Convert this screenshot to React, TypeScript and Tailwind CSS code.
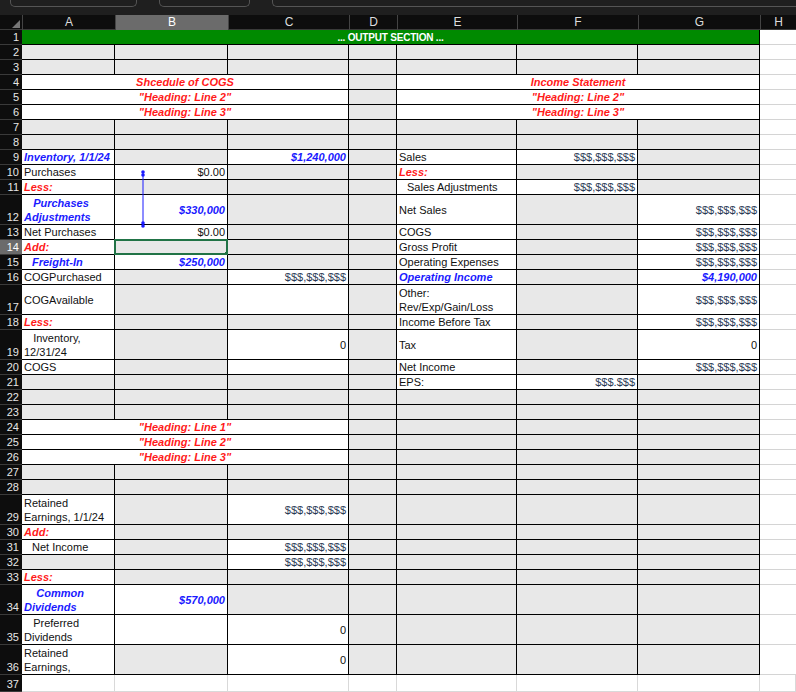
import React from 'react';

type Kind = 'n' | 'blue' | 'red' | 'money' | 'hd';
type Cell = { t?: string; s?: number; g?: boolean; r?: boolean; k?: Kind; ind?: boolean; mid?: boolean };

const cols = 'grid grid-cols-[22px_93px_113px_121px_48px_120px_121px_122px_36px]';
const M = '$$$,$$$,$$$';

const G: Cell = { g: true };
const W: Cell = {};
const g3 = [G, G, G];

// left block (A-C) and right block (E-G) per row 2..36
const rows: { n: number; tall?: boolean; L: Cell[]; R: Cell[] }[] = [
  { n: 2, L: g3, R: g3 },
  { n: 3, L: g3, R: g3 },
  { n: 4, L: [{ t: 'Shcedule of COGS', s: 3, k: 'hd' }], R: [{ t: 'Income Statement', s: 3, k: 'hd' }] },
  { n: 5, L: [{ t: '"Heading: Line 2"', s: 3, k: 'hd' }], R: [{ t: '"Heading: Line 2"', s: 3, k: 'hd' }] },
  { n: 6, L: [{ t: '"Heading: Line 3"', s: 3, k: 'hd' }], R: [{ t: '"Heading: Line 3"', s: 3, k: 'hd' }] },
  { n: 7, L: g3, R: g3 },
  { n: 8, L: g3, R: g3 },
  { n: 9, L: [{ t: 'Inventory, 1/1/24', k: 'blue' }, G, { t: '$1,240,000', k: 'blue', r: true }], R: [{ t: 'Sales' }, { t: M, k: 'money', r: true }, G] },
  { n: 10, L: [{ t: 'Purchases' }, { t: '$0.00', r: true }, G], R: [{ t: 'Less:', k: 'red' }, G, G] },
  { n: 11, L: [{ t: 'Less:', k: 'red' }, G, G], R: [{ t: 'Sales Adjustments', ind: true }, { t: M, k: 'money', r: true }, G] },
  { n: 12, tall: true, L: [{ t: '\u00a0\u00a0\u00a0Purchases Adjustments', k: 'blue' }, { t: '$330,000', k: 'blue', r: true, mid: true }, G], R: [{ t: 'Net Sales', mid: true }, G, { t: M, k: 'money', r: true, mid: true }] },
  { n: 13, L: [{ t: 'Net Purchases' }, { t: '$0.00', r: true }, G], R: [{ t: 'COGS' }, G, { t: M, k: 'money', r: true }] },
  { n: 14, L: [{ t: 'Add:', k: 'red' }, G, G], R: [{ t: 'Gross Profit' }, G, { t: M, k: 'money', r: true }] },
  { n: 15, L: [{ t: 'Freight-In', k: 'blue', ind: true }, { t: '$250,000', k: 'blue', r: true }, G], R: [{ t: 'Operating Expenses' }, G, { t: M, k: 'money', r: true }] },
  { n: 16, L: [{ t: 'COGPurchased' }, G, { t: M, k: 'money', r: true }], R: [{ t: 'Operating Income', k: 'blue' }, G, { t: '$4,190,000', k: 'blue', r: true }] },
  { n: 17, tall: true, L: [{ t: 'COGAvailable', mid: true }, G, W], R: [{ t: 'Other: Rev/Exp/Gain/Loss' }, G, { t: M, k: 'money', r: true, mid: true }] },
  { n: 18, L: [{ t: 'Less:', k: 'red' }, G, G], R: [{ t: 'Income Before Tax' }, G, { t: M, k: 'money', r: true }] },
  { n: 19, tall: true, L: [{ t: '\u00a0\u00a0\u00a0Inventory, 12/31/24' }, G, { t: '0', r: true, mid: true }], R: [{ t: 'Tax', mid: true }, G, { t: '0', r: true, mid: true }] },
  { n: 20, L: [{ t: 'COGS' }, G, W], R: [{ t: 'Net Income' }, G, { t: M, k: 'money', r: true }] },
  { n: 21, L: g3, R: [{ t: 'EPS:' }, { t: '$$$.$$$', k: 'money', r: true }, G] },
  { n: 22, L: g3, R: g3 },
  { n: 23, L: g3, R: g3 },
  { n: 24, L: [{ t: '"Heading: Line 1"', s: 3, k: 'hd' }], R: g3 },
  { n: 25, L: [{ t: '"Heading: Line 2"', s: 3, k: 'hd' }], R: g3 },
  { n: 26, L: [{ t: '"Heading: Line 3"', s: 3, k: 'hd' }], R: g3 },
  { n: 27, L: g3, R: g3 },
  { n: 28, L: g3, R: g3 },
  { n: 29, tall: true, L: [{ t: 'Retained Earnings, 1/1/24' }, G, { t: M, k: 'money', r: true, mid: true }], R: g3 },
  { n: 30, L: [{ t: 'Add:', k: 'red' }, G, G], R: g3 },
  { n: 31, L: [{ t: 'Net Income', ind: true }, G, { t: M, k: 'money', r: true }], R: g3 },
  { n: 32, L: [G, G, { t: M, k: 'money', r: true }], R: g3 },
  { n: 33, L: [{ t: 'Less:', k: 'red' }, G, G], R: g3 },
  { n: 34, tall: true, L: [{ t: '\u00a0\u00a0\u00a0\u00a0Common Dividends', k: 'blue' }, { t: '$570,000', k: 'blue', r: true, mid: true }, G], R: g3 },
  { n: 35, tall: true, L: [{ t: '\u00a0\u00a0\u00a0Preferred Dividends' }, W, { t: '0', r: true, mid: true }], R: g3 },
  { n: 36, tall: true, L: [{ t: 'Retained Earnings,' }, G, { t: '0', r: true, mid: true }], R: g3 },
];

const kindCls: Record<Kind, string> = {
  n: 'text-[#111]',
  blue: 'text-[#1a1aff] italic font-bold',
  red: 'text-[#ff1a1a] italic font-bold',
  money: 'text-[#2b3a55]',
  hd: 'text-[#ff1a1a] italic font-bold justify-center',
};

function CellView({ c, sel, tall }: { c: Cell; sel?: boolean; tall?: boolean }) {
  const k = c.k ?? 'n';
  const span = c.s === 3 ? 'col-span-3' : '';
  const align = c.r ? 'justify-end text-right' : '';
  const v = c.mid ? 'items-center' : 'items-end';
  return (
    <div
      className={`relative min-h-0 flex ${v} ${span} ${align} ${kindCls[k]} ${c.g ? 'bg-[#e8e8e8]' : 'bg-white'} border-r border-b border-black px-[2px] leading-[14px] ${tall ? 'overflow-hidden' : 'whitespace-nowrap'} ${c.ind ? 'pl-[10px]' : ''}`}
    >
      <span className={tall ? 'whitespace-pre-wrap' : 'whitespace-pre'}>{c.t}</span>
      {sel && (
        <>
          <div className="absolute inset-[-1px] border-2 border-[#217346]" />
          <div className="absolute right-[-3px] bottom-[-3px] w-[5px] h-[5px] bg-[#217346]" />
        </>
      )}
    </div>
  );
}

function RowHead({ n, active }: { n: number; active?: boolean }) {
  return (
    <div className={`min-h-0 flex items-end justify-end pr-[3px] leading-[14px] text-[11px] border-b border-[#3a3a3a] ${active ? 'bg-[#6b6b6b] text-white' : 'bg-[#0d0d0d] text-[#e6e6e6]'}`}>
      {n}
    </div>
  );
}

export default function App() {
  return (
    <div className="w-[796px] h-[692px] overflow-hidden bg-white text-[11px] font-[Arial,sans-serif]">
      {/* toolbar remnant */}
      <div className="h-[15px] bg-[#1f1f1f] flex gap-[22px] pl-[10px]">
        <div className="w-[127px] h-[7px] rounded-b-[5px] border border-t-0 border-[#555]" />
        <div className="w-[91px] h-[7px] rounded-b-[5px] border border-t-0 border-[#555]" />
        <div className="flex-1 h-[7px] rounded-bl-[5px] border border-t-0 border-r-0 border-[#555]" />
      </div>
      {/* column headers */}
      <div className={`${cols} grid-rows-[15px] h-[15px] bg-[#0d0d0d] text-[#dcdcdc] text-[12px] leading-[14px] border-b border-[#3a3a3a]`}>
        <div className="relative">
          <div className="absolute right-[2px] bottom-[2px] w-0 h-0 border-l-[8px] border-l-transparent border-b-[8px] border-b-[#777]" />
        </div>
        {['A', 'B', 'C', 'D', 'E', 'F', 'G', 'H'].map((l) => (
          <div key={l} className={`text-center border-l border-[#444] ${l === 'B' ? 'bg-[#6b6b6b] text-white' : ''}`}>{l}</div>
        ))}
      </div>
      {/* row 1 */}
      <div className={`${cols} grid-rows-[15px] h-[15px]`}>
        <RowHead n={1} />
        <div className="col-span-7 min-h-0 bg-[#008a00] border-r border-b border-black flex items-center justify-center text-white font-bold text-[10px] tracking-[-0.2px]">
          ... OUTPUT SECTION ...
        </div>
        <div className="border-b border-[#d4d4d4]" />
      </div>
      {rows.map((row) => (
        <div key={row.n} className={`${cols} ${row.tall ? 'grid-rows-[30px] h-[30px]' : 'grid-rows-[15px] h-[15px]'} relative`}>
          <RowHead n={row.n} active={row.n === 14} />
          {row.L.map((c, i) => (
            <CellView key={'l' + i} c={c} tall={row.tall} sel={row.n === 14 && i === 1} />
          ))}
          <div className="bg-[#e8e8e8] border-r border-b border-black" />
          {row.R.map((c, i) => (
            <CellView key={'r' + i} c={c} tall={row.tall} />
          ))}
          <div className="border-b border-[#d4d4d4]" />
          {row.n === 10 && (
            <svg className="absolute left-[139px] top-[4px] z-10" width="8" height="60" viewBox="0 0 8 60">
              <line x1="4" y1="2" x2="4" y2="58" stroke="#1a1aff" strokeWidth="1" />
              <circle cx="4" cy="3" r="1.8" fill="#1a1aff" />
              <circle cx="4" cy="6" r="1.8" fill="#1a1aff" />
              <circle cx="4" cy="54" r="1.8" fill="#1a1aff" />
              <circle cx="4" cy="57" r="1.8" fill="#1a1aff" />
            </svg>
          )}
        </div>
      ))}
      {/* row 37 */}
      <div className={`${cols} grid-rows-[17px] h-[17px]`}>
        <RowHead n={37} />
        {[0, 1, 2, 3, 4, 5, 6, 7].map((i) => (
          <div key={i} className="border-r border-b border-[#d9d9d9]" />
        ))}
      </div>
    </div>
  );
}
